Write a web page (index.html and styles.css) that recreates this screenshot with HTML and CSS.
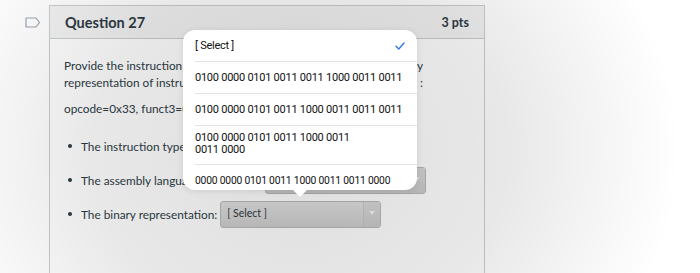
FILE: index.html
```html
<!DOCTYPE html>
<html lang="en">
  <head>
    <meta charset="UTF-8" />
    <title>Question 27</title>
    <link rel="stylesheet" href="styles.css">
  </head>
  <body>
    <div class="page">
      <div class="flag">
        <svg width="16" height="11" viewBox="0 0 16 11">
          <path d="M1 1 H11 L14.5 5.5 L11 10 H1 Z" fill="none" stroke="#9aa6b0" stroke-width="1.2" stroke-linejoin="round" />
        </svg>
      </div>
      <div class="question">
        <div class="question-header">
          <span class="title">Question 27</span>
          <span class="points">3 pts</span>
        </div>
        <div class="question-body">
          <p class="intro">
            <span class="line"><span>Provide the instruction type, assembly language and</span><span>binary</span></span>
            <span class="line"><span>representation of instruction for these fields</span><span>:</span></span>
          </p>
          <p class="fields">opcode=0x33, funct3=0x0, funct7=0x20, rd=x6, rs1=x6, rs2=x5</p>
          <ul class="answers">
            <li>The instruction type: <span class="select">[ Select ]<span class="arrow"></span></span></li>
            <li>The assembly language instruction: <span class="select">[ Select ]<span class="arrow"></span></span></li>
            <li>The binary representation: <span class="select">[ Select ]<span class="arrow"></span></span></li>
          </ul>
        </div>
      </div>
    </div>

    <div class="dim"></div>

    <div class="popup">
      <div class="options">
        <div class="option selected">
          <span>[ Select ]</span>
          <svg width="10" height="8" viewBox="0 0 10 8">
            <path d="M1 4.2 L3.8 7 L9 1" fill="none" stroke="#2f7de1" stroke-width="1.4" stroke-linecap="round" stroke-linejoin="round" />
          </svg>
        </div>
        <div class="option">0100 0000 0101 0011 0011 1000 0011 0011</div>
        <div class="option">0100 0000 0101 0011 1000 0011 0011 0011</div>
        <div class="option tall">0100 0000 0101 0011 1000 0011<br>0011 0000</div>
        <div class="option small">0000 0000 0101 0011 1000 0011 0011 0000</div>
      </div>
      <div class="tail"></div>
    </div>
  </body>
</html>
```

FILE: styles.css
```css
body {
    margin: 0;
    background-color: #fff;
    font-family: Lato, "Helvetica Neue", sans-serif;
    color: #2d3b45;
    width: 700px;
    height: 273px;
    overflow: hidden;
    position: relative;
}
.page {
    display: flex;
    align-items: flex-start;
    padding-top: 5px;
}
.flag {
    width: 49px;
    display: flex;
    justify-content: flex-end;
    padding-top: 12px;
    padding-right: 8px;
    box-sizing: border-box;
}
.question {
    width: 436px;
    height: 300px;
    border: 1px solid #c7cdd1;
    box-sizing: border-box;
    background-color: #fff;
}
.question-header {
    display: flex;
    justify-content: space-between;
    align-items: center;
    height: 32px;
    padding: 0 15px;
    background-color: #f2f2f2;
    border-bottom: 1px solid #c7cdd1;
}
.title {
    font-size: 14.5px;
    font-weight: bold;
}
.points {
    font-size: 12.5px;
    font-weight: bold;
}
.question-body {
    padding: 18px 14px 0 14px;
    font-size: 11.8px;
}
.intro {
    width: 359px;
    margin: 0;
    line-height: 17px;
}
.intro .line {
    display: flex;
    justify-content: space-between;
    white-space: nowrap;
    overflow: hidden;
}
.fields {
    margin: 9px 0 0 0;
    line-height: 17px;
    white-space: nowrap;
}
.answers {
    list-style: none;
    margin: 12px 0 0 0;
    padding-left: 17px;
}
.answers li {
    height: 34px;
    display: flex;
    align-items: center;
    white-space: nowrap;
    position: relative;
}
.answers li::before {
    content: "";
    width: 4px;
    height: 4px;
    border-radius: 50%;
    background-color: #2d3b45;
    position: absolute;
    left: -13px;
    top: 15px;
}
.select {
    display: inline-flex;
    align-items: center;
    position: relative;
    width: 161px;
    height: 27px;
    margin-left: 3px;
    padding-left: 6px;
    padding-bottom: 3px;
    box-sizing: border-box;
    border: 1px solid #b9b9b9;
    border-radius: 3px;
    background: linear-gradient(#e0e0e0, #cdcdcd);
    font-size: 10.5px;
}
.arrow {
    position: absolute;
    right: 0;
    top: 0;
    bottom: 0;
    width: 16px;
    border-left: 1px solid #c6c6c6;
    background: linear-gradient(#d9d9d9, #cbcbcb);
}
.arrow::after {
    content: "";
    position: absolute;
    left: 5px;
    top: 9px;
    border-left: 3px solid transparent;
    border-right: 3px solid transparent;
    border-top: 4px solid #f4f4f4;
}
.dim {
    position: absolute;
    inset: 0;
    background: radial-gradient(ellipse 380px 330px at 300px 150px, rgba(0, 0, 0, 0.13), rgba(0, 0, 0, 0.09) 55%, rgba(0, 0, 0, 0) 100%);
}
.popup {
    position: absolute;
    left: 183px;
    top: 30px;
    width: 234px;
    height: 160px;
    font-family: Roboto, "Helvetica Neue", sans-serif;
    color: #111;
}
.options {
    height: 100%;
    background-color: #fff;
    border-radius: 12px;
    overflow: hidden;
    box-shadow: 0 1px 6px rgba(0, 0, 0, 0.1);
}
.option {
    margin-left: 12px;
    height: 32px;
    box-sizing: border-box;
    border-bottom: 1px solid #e4e4e4;
    display: flex;
    align-items: center;
    font-size: 11px;
    letter-spacing: -0.25px;
    line-height: 12px;
}
.option.selected {
    justify-content: space-between;
    padding-right: 12px;
}
.option.tall {
    height: 39px;
    padding-bottom: 2px;
}
.option.small {
    font-size: 10.3px;
    letter-spacing: -0.2px;
    border-bottom: none;
    align-items: flex-start;
    padding-top: 10px;
}
.tail {
    position: absolute;
    left: 109px;
    top: 159px;
    border-left: 8px solid transparent;
    border-right: 8px solid transparent;
    border-top: 8px solid #fff;
}
```
